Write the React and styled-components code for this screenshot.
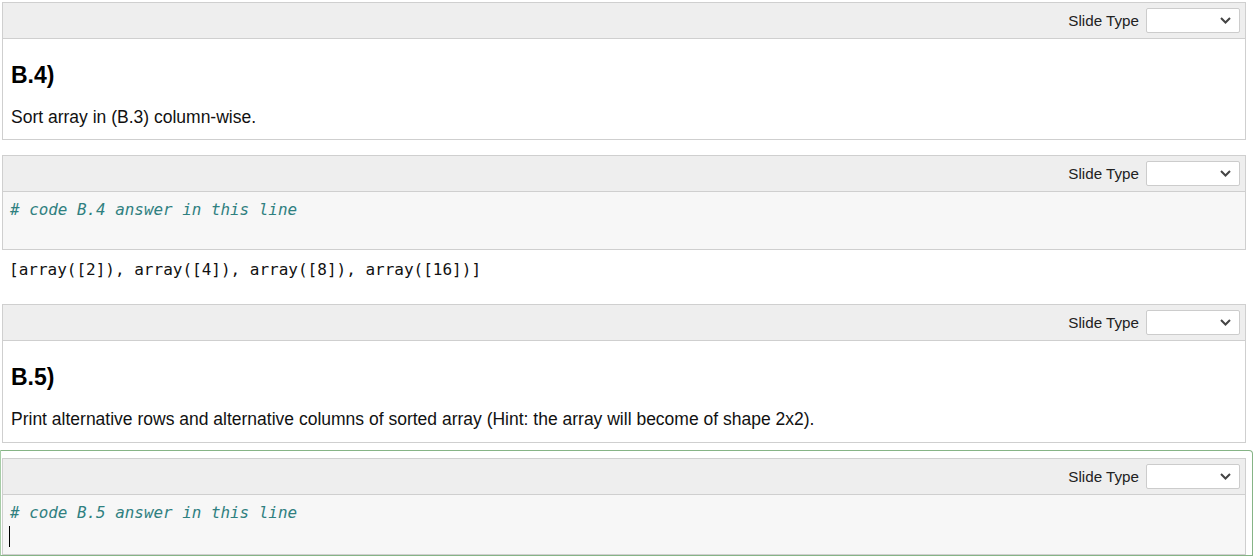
import styled, { createGlobalStyle } from "styled-components";

const GlobalStyle = createGlobalStyle`
  body {
    margin: 0;
    background: #fff;
    font-family: "Liberation Sans", Arial, sans-serif;
  }
`;

const Notebook = styled("div")`
  display: flex;
  flex-direction: column;
  padding-top: 2px;
  width: 1256px;
  height: 557px;
  overflow: hidden;
`;

const Cell = styled("div")`
  width: 1244px;
  box-sizing: border-box;
  margin-left: ${(p) => (p.$inner ? "1px" : "2px")};
  border: 1px solid #cfcfcf;
  display: flex;
  flex-direction: column;
`;

const Selected = styled("div")`
  width: 1253px;
  box-sizing: border-box;
  border: 1px solid #86b486;
  border-left-color: #a6cca6;
  border-radius: 0 4px 0 0;
  padding-top: 7px;
  margin-top: 7px;
`;

const Toolbar = styled("div")`
  height: 35px;
  background: #eeeeee;
  border-bottom: 1px solid #cfcfcf;
  display: flex;
  align-items: center;
  justify-content: flex-end;
  padding-right: 5px;
  gap: 7px;
`;

const Label = styled("span")`
  font-size: 15.2px;
  color: #222;
`;

const SelectBox = styled("div")`
  width: 94px;
  height: 25px;
  box-sizing: border-box;
  background: #fff;
  border: 1px solid #cccccc;
  border-radius: 2px;
  display: flex;
  align-items: center;
  justify-content: flex-end;
  padding-right: 8px;
`;

const Markdown = styled("div")`
  height: ${(p) => p.$h}px;
  padding: 23px 8px 0;
  box-sizing: border-box;
`;

const Heading = styled("h4")`
  margin: 0 0 18px;
  font-size: 23px;
  font-weight: bold;
  color: #000;
  line-height: 26px;
`;

const Para = styled("p")`
  margin: 0;
  font-size: 17.5px;
  line-height: 22px;
  color: #111;
`;

const Code = styled("div")`
  height: ${(p) => p.$h}px;
  background: #f7f7f7;
  padding: 8px 7px 0;
  box-sizing: border-box;
  font-family: "DejaVu Sans Mono", monospace;
  font-size: 15.9px;
  line-height: 20px;
`;

const Comment = styled("div")`
  color: #2f8080;
  font-style: italic;
`;

const Cursor = styled("div")`
  width: 1px;
  height: 21px;
  background: #000;
  margin: 3px 0 0 -1px;
`;

const Output = styled("div")`
  height: 54px;
  padding: 10px 0 0 9px;
  box-sizing: border-box;
  font-family: "DejaVu Sans Mono", monospace;
  font-size: 16px;
  line-height: 20px;
  color: #111;
`;

const Gap = styled("div")`
  height: ${(p) => p.$h}px;
`;

const Chevron = () => (
  <svg width="11" height="7" viewBox="0 0 11 7">
    <path d="M1 1l4.5 4.5L10 1" fill="none" stroke="#444" strokeWidth="2" />
  </svg>
);

const Header = () => (
  <Toolbar>
    <Label>Slide Type</Label>
    <SelectBox>
      <Chevron />
    </SelectBox>
  </Toolbar>
);

export default function App() {
  return (
    <>
      <GlobalStyle />
      <Notebook>
        <Cell>
          <Header />
          <Markdown $h={100}>
            <Heading>B.4)</Heading>
            <Para>Sort array in (B.3) column-wise.</Para>
          </Markdown>
        </Cell>
        <Gap $h={15} />
        <Cell>
          <Header />
          <Code $h={57}>
            <Comment># code B.4 answer in this line</Comment>
          </Code>
        </Cell>
        <Output>[array([2]), array([4]), array([8]), array([16])]</Output>
        <Cell>
          <Header />
          <Markdown $h={101}>
            <Heading>B.5)</Heading>
            <Para>
              Print alternative rows and alternative columns of sorted array
              (Hint: the array will become of shape 2x2).
            </Para>
          </Markdown>
        </Cell>
        <Selected>
          <Cell $inner>
            <Header />
            <Code $h={59}>
              <Comment># code B.5 answer in this line</Comment>
              <Cursor />
            </Code>
          </Cell>
        </Selected>
      </Notebook>
    </>
  );
}
